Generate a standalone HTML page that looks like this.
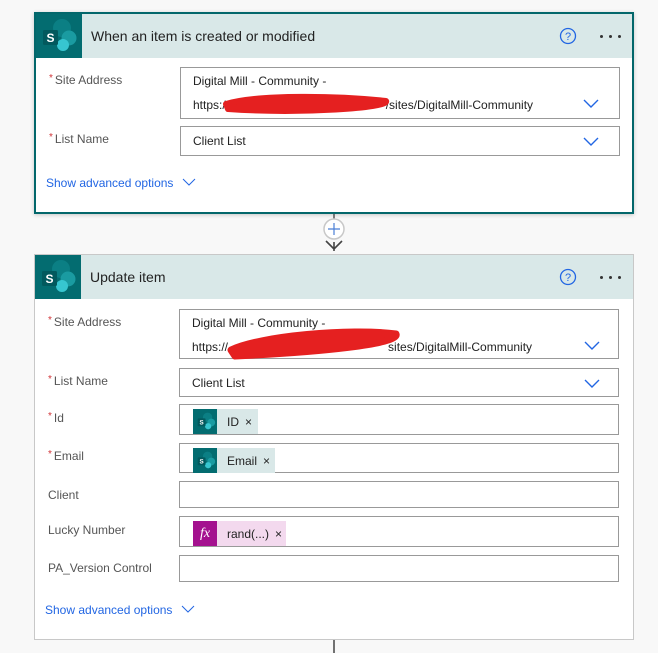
<!DOCTYPE html>
<html><head><meta charset="utf-8"><style>
*{margin:0;padding:0;box-sizing:border-box}
body{width:658px;height:653px;background:#f8f8f8;font-family:"Segoe UI","Liberation Sans",sans-serif;position:relative;overflow:hidden;color:#222}
.a{position:absolute}
.card{position:absolute;background:#fff}
.hdr{position:absolute;left:0;right:0;top:0;height:44px;background:#d9e8e8}
.ico{position:absolute;left:0;top:0;width:46px;height:44px;background:#036c70}
.title{position:absolute;left:55px;top:14px;font-size:14px;color:#222}
.lbl{position:absolute;left:13px;font-size:12px;color:#555}
.lbl b{color:#d13438;font-weight:normal;font-size:10px;margin-right:2px;vertical-align:top}
.box{position:absolute;border:1px solid #999;background:#fff;font-size:12px;color:#222}
.adv{position:absolute;left:10px;font-size:12px;color:#2266e3}
.tok{position:absolute;top:4px;left:13px;height:25px;display:flex;align-items:center;font-size:12px}
.ti{width:24px;height:25px;display:flex;align-items:center;justify-content:center}
.dots{position:absolute;top:21px;width:24px;height:4px}
.dots i{position:absolute;top:0;width:3px;height:3px;border-radius:50%;background:#333}
</style></head><body>
<svg width="0" height="0" style="position:absolute"><defs>
<g id="sp"><circle cx="26" cy="14" r="9" fill="#0b7f84"/><circle cx="33" cy="24" r="7.5" fill="#1a9ba1"/><circle cx="27" cy="31" r="6" fill="#37c6d0"/><rect x="7" y="16" width="15" height="15" rx="1.5" fill="#02595d"/><text x="14.5" y="28" font-size="12" font-weight="bold" fill="#fff" text-anchor="middle" font-family="Liberation Sans">S</text></g>
<g id="chev"><path d="M1 1 L8 8 L15 1" fill="none" stroke="#2266e3" stroke-width="1.4"/></g>
</defs></svg>

<div class="card" style="left:34px;top:12px;width:600px;height:202px;border:2px solid #03676b;box-shadow:0 1px 4px rgba(0,0,0,.2)">
 <div class="hdr"><div class="ico"><svg width="46" height="44"><use href="#sp"/></svg></div>
 <div class="title">When an item is created or modified</div>
 <svg class="a" style="left:523px;top:13px" width="18" height="18"><circle cx="9" cy="9" r="7.5" fill="none" stroke="#2266e3" stroke-width="1.3"/><text x="9" y="13" font-size="11" text-anchor="middle" fill="#2266e3" font-family="Liberation Sans">?</text></svg>
 <div class="dots" style="left:564px"><i style="left:0"></i><i style="left:9px"></i><i style="left:18px"></i></div>
 </div>
 <div class="lbl" style="top:59px"><b>*</b>Site Address</div>
 <div class="box" style="left:144px;top:53px;width:440px;height:52px"><div class="a" style="left:12px;top:6px">Digital Mill - Community -</div><div class="a" style="left:12px;top:30px">https:/<span style="margin-left:160px">/sites/DigitalMill-Community</span></div>
 <svg class="a" style="left:402px;top:31px" width="16" height="10"><use href="#chev"/></svg></div>
 <div class="lbl" style="top:118px"><b>*</b>List Name</div>
 <div class="box" style="left:144px;top:112px;width:440px;height:30px"><div class="a" style="left:12px;top:7px">Client List</div>
 <svg class="a" style="left:402px;top:10px" width="16" height="10"><use href="#chev"/></svg></div>
 <div class="adv" style="top:162px">Show advanced options <svg width="14" height="9" style="margin-left:5px"><path d="M1 1 L7 7 L13 1" fill="none" stroke="#2266e3" stroke-width="1"/></svg></div>
</div>
<svg class="a" style="left:0;top:0" width="658" height="653">
<line x1="334" y1="214" x2="334" y2="219" stroke="#555" stroke-width="1.5"/>
<circle cx="334" cy="229" r="10" fill="#fff" stroke="#c8c8c8" stroke-width="1.5"/>
<path d="M328 229 H340 M334 223 V235" stroke="#4b7fd6" stroke-width="1.2"/>
<path d="M326 241 L334 249 L342 241 M334 242 V251" fill="none" stroke="#444" stroke-width="1.6"/>
<line x1="334" y1="640" x2="334" y2="653" stroke="#444" stroke-width="1.5"/>
</svg>

<div class="card" style="left:34px;top:254px;width:600px;height:386px;border:1px solid #c8c8c8">
 <div class="hdr"><div class="ico"><svg width="46" height="44"><use href="#sp"/></svg></div>
 <div class="title">Update item</div>
 <svg class="a" style="left:524px;top:13px" width="18" height="18"><circle cx="9" cy="9" r="7.5" fill="none" stroke="#2266e3" stroke-width="1.3"/><text x="9" y="13" font-size="11" text-anchor="middle" fill="#2266e3" font-family="Liberation Sans">?</text></svg>
 <div class="dots" style="left:565px"><i style="left:0"></i><i style="left:9px"></i><i style="left:18px"></i></div>
 </div>
 <div class="lbl" style="top:60px"><b>*</b>Site Address</div>
 <div class="box" style="left:144px;top:54px;width:440px;height:50px"><div class="a" style="left:12px;top:6px">Digital Mill - Community -</div><div class="a" style="left:12px;top:30px">https://<span style="margin-left:160px">sites/DigitalMill-Community</span></div>
 <svg class="a" style="left:404px;top:31px" width="16" height="10"><use href="#chev"/></svg></div>
 <div class="lbl" style="top:119px"><b>*</b>List Name</div>
 <div class="box" style="left:144px;top:113px;width:440px;height:29px"><div class="a" style="left:12px;top:7px">Client List</div>
 <svg class="a" style="left:404px;top:10px" width="16" height="10"><use href="#chev"/></svg></div>
 <div class="lbl" style="top:156px"><b>*</b>Id</div>
 <div class="box" style="left:144px;top:149px;width:440px;height:31px"><div class="tok" style="background:#d9e8e8;width:65px"><div class="ti" style="background:#036c70"><svg width="24" height="25" viewBox="0 0 46 44"><g transform="translate(2,0)"><use href="#sp"/></g></svg></div><span style="margin-left:10px">ID</span><span style="margin-left:6px">×</span></div></div>
 <div class="lbl" style="top:194px"><b>*</b>Email</div>
 <div class="box" style="left:144px;top:188px;width:440px;height:30px"><div class="tok" style="background:#d9e8e8;width:82px"><div class="ti" style="background:#036c70"><svg width="24" height="25" viewBox="0 0 46 44"><g transform="translate(2,0)"><use href="#sp"/></g></svg></div><span style="margin-left:10px">Email</span><span style="margin-left:6px">×</span></div></div>
 <div class="lbl" style="top:233px">Client</div>
 <div class="box" style="left:144px;top:226px;width:440px;height:27px"></div>
 <div class="lbl" style="top:268px">Lucky Number</div>
 <div class="box" style="left:144px;top:261px;width:440px;height:31px"><div class="tok" style="background:#f3d9ee;width:93px"><div class="ti" style="background:#a4118f;color:#fff;font-family:'Liberation Serif',serif;font-style:italic;font-size:14px">fx</div><span style="margin-left:10px">rand(...)</span><span style="margin-left:6px">×</span></div></div>
 <div class="lbl" style="top:306px">PA_Version Control</div>
 <div class="box" style="left:144px;top:300px;width:440px;height:27px"></div>
 <div class="adv" style="top:348px">Show advanced options <svg width="14" height="9" style="margin-left:5px"><path d="M1 1 L7 7 L13 1" fill="none" stroke="#2266e3" stroke-width="1"/></svg></div>
</div>
<svg class="a" style="left:0;top:0;pointer-events:none" width="658" height="653">
<path d="M226 104 C260 94 340 96 386 101 C390 108 300 114 228 109 Z" fill="#e52020" stroke="#e52020" stroke-width="6" stroke-linejoin="round"/>
<path d="M231 350 C260 336 350 328 396 334 C400 344 320 352 235 356 Z" fill="#e52020" stroke="#e52020" stroke-width="7" stroke-linejoin="round"/>
</svg>
</body></html>
